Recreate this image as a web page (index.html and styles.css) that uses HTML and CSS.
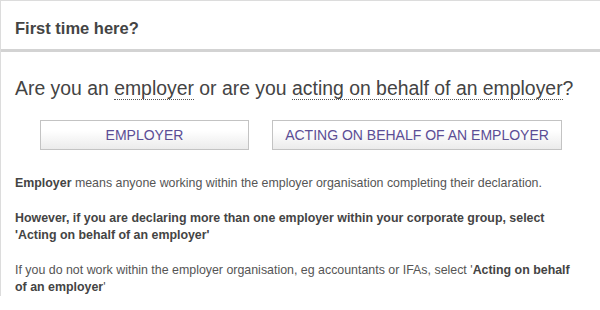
FILE: index.html
```html
<!DOCTYPE html>
<html>
<head>
<meta charset="utf-8">
<link rel="stylesheet" href="styles.css">
</head>
<body>
<div class="panel">
  <div class="panel-header">First time here?</div>
  <div class="panel-body">
    <h2 class="question">Are you an <abbr class="term">employer</abbr> or are you <abbr class="term">acting on behalf of an employer</abbr>?</h2>
    <div class="choices">
      <button class="btn btn-employer">EMPLOYER</button>
      <button class="btn btn-agent">ACTING ON BEHALF OF AN EMPLOYER</button>
    </div>
    <div class="notes">
      <p class="note"><strong>Employer</strong> means anyone working within the employer organisation completing their declaration.</p>
      <p class="note strong">However, if you are declaring more than one employer within your corporate group, select 'Acting on behalf of an employer'</p>
      <p class="note">If you do not work within the employer organisation, eg accountants or IFAs, select '<strong>Acting on behalf of an employer</strong>'</p>
    </div>
  </div>
</div>
</body>
</html>
```
FILE: styles.css
```css
html, body {
  margin: 0;
  padding: 0;
  background: #fff;
  overflow: hidden;
}
body {
  font-family: "Liberation Sans", Arial, sans-serif;
  color: #444;
}
.panel {
  border-top: 1px solid #dcdcdc;
  border-left: 1px solid #dcdcdc;
  width: 599px;
}
.panel-header {
  height: 48px;
  line-height: 54px;
  padding: 0 14px;
  font-size: 16.5px;
  font-weight: bold;
  color: #444;
  border-bottom: 3px solid #d3d3d3;
}
.panel-body {
  padding: 0 9px 0 14px;
}
.question {
  margin: 24px 0 0;
  font-size: 19.4px;
  font-weight: normal;
  line-height: 24px;
  color: #444;
}
.term {
  text-decoration: none;
  border-bottom: 1px dotted #555;
  cursor: help;
}
.choices {
  display: flex;
  gap: 23px;
  margin: 20px 0 0 25px;
}
.btn {
  height: 30px;
  padding: 0;
  font-family: "Liberation Sans", Arial, sans-serif;
  font-size: 14px;
  color: #5b4d95;
  border: 1px solid #c3c3c3;
  background: linear-gradient(to bottom, #ffffff 0%, #ffffff 35%, #ebebeb 100%);
}
.btn-employer {
  width: 209px;
}
.btn-agent {
  width: 290px;
}
.notes {
  max-width: 560px;
}
.note {
  margin: 25px 0 0;
  font-size: 12.4px;
  line-height: 17px;
  color: #555;
}
.note strong,
.note.strong {
  font-weight: bold;
  color: #444;
}
.note + .note {
  margin-top: 18px;
}
```
